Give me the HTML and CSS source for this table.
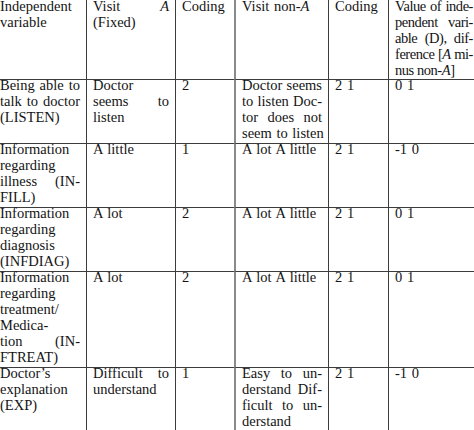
FILE: index.html
```html
<!DOCTYPE html>
<html>
<head>
<meta charset="utf-8">
<link rel="stylesheet" href="styles.css">
</head>
<body>
<table class="tbl">
  <colgroup>
    <col class="c1"><col class="c2"><col class="c3"><col class="c4"><col class="c5"><col class="c6">
  </colgroup>
  <thead>
    <tr>
      <th><div class="in"><span class="l">Independent</span><span class="l">variable</span></div></th>
      <th><div class="in"><span class="l j">Visit <i>A</i></span><span class="l">(Fixed)</span></div></th>
      <th><div class="in"><span class="l">Coding</span></div></th>
      <th class="dbl"><div class="in"><span class="l">Visit non-<i>A</i></span></div></th>
      <th><div class="in"><span class="l">Coding</span></div></th>
      <th class="last"><div class="in"><span class="l j">Value of inde-</span><span class="l j">pendent vari-</span><span class="l j">able (D), dif-</span><span class="l j">ference [<i>A</i> mi-</span><span class="l">nus non-<i>A</i>]</span></div></th>
    </tr>
  </thead>
  <tbody>
    <tr>
      <td><div class="in"><span class="l j">Being able to</span><span class="l j">talk to doctor</span><span class="l">(LISTEN)</span></div></td>
      <td><div class="in"><span class="l">Doctor</span><span class="l j">seems to</span><span class="l">listen</span></div></td>
      <td><div class="in"><span class="l">2</span></div></td>
      <td class="dbl"><div class="in"><span class="l j">Doctor seems</span><span class="l j">to listen Doc-</span><span class="l j">tor does not</span><span class="l">seem to listen</span></div></td>
      <td><div class="in"><span class="l">2 1</span></div></td>
      <td><div class="in"><span class="l">0 1</span></div></td>
    </tr>
    <tr>
      <td><div class="in"><span class="l">Information</span><span class="l">regarding</span><span class="l j">illness (IN-</span><span class="l">FILL)</span></div></td>
      <td><div class="in"><span class="l">A little</span></div></td>
      <td><div class="in"><span class="l">1</span></div></td>
      <td class="dbl"><div class="in"><span class="l">A lot A little</span></div></td>
      <td><div class="in"><span class="l">2 1</span></div></td>
      <td><div class="in"><span class="l">-1 0</span></div></td>
    </tr>
    <tr>
      <td><div class="in"><span class="l">Information</span><span class="l">regarding</span><span class="l">diagnosis</span><span class="l">(INFDIAG)</span></div></td>
      <td><div class="in"><span class="l">A lot</span></div></td>
      <td><div class="in"><span class="l">2</span></div></td>
      <td class="dbl"><div class="in"><span class="l">A lot A little</span></div></td>
      <td><div class="in"><span class="l">2 1</span></div></td>
      <td><div class="in"><span class="l">0 1</span></div></td>
    </tr>
    <tr>
      <td><div class="in"><span class="l">Information</span><span class="l">regarding</span><span class="l">treatment/</span><span class="l">Medica-</span><span class="l j">tion (IN-</span><span class="l">FTREAT)</span></div></td>
      <td><div class="in"><span class="l">A lot</span></div></td>
      <td><div class="in"><span class="l">2</span></div></td>
      <td class="dbl"><div class="in"><span class="l">A lot A little</span></div></td>
      <td><div class="in"><span class="l">2 1</span></div></td>
      <td><div class="in"><span class="l">0 1</span></div></td>
    </tr>
    <tr>
      <td><div class="in"><span class="l">Doctor’s</span><span class="l">explanation</span><span class="l">(EXP)</span></div></td>
      <td><div class="in"><span class="l j">Difficult to</span><span class="l">understand</span></div></td>
      <td><div class="in"><span class="l">1</span></div></td>
      <td class="dbl"><div class="in"><span class="l j">Easy to un-</span><span class="l j">derstand Dif-</span><span class="l j">ficult to un-</span><span class="l">derstand</span></div></td>
      <td><div class="in"><span class="l">2 1</span></div></td>
      <td><div class="in"><span class="l">-1 0</span></div></td>
    </tr>
  </tbody>
</table>
</body>
</html>
```

FILE: styles.css
```css
html, body {
  margin: 0;
  padding: 0;
  background: #ffffff;
  overflow: hidden;
}

body {
  width: 474px;
  height: 430px;
}

.tbl {
  border-collapse: separate;
  border-spacing: 0;
  table-layout: fixed;
  width: 485px;
  margin-left: -6px;
  font-family: "Liberation Serif", "Times New Roman", serif;
  font-size: 14.5px;
  color: #141414;
}

.c1 { width: 92px; }
.c2 { width: 89px; }
.c3 { width: 59px; }
.c4 { width: 94px; }
.c5 { width: 60px; }
.c6 { width: 91px; }

.tbl th,
.tbl td {
  box-sizing: border-box;
  vertical-align: top;
  text-align: left;
  font-weight: normal;
  padding: 0 6px;
  border-left: 1px solid #3c3c3c;
}

.tbl th:first-child,
.tbl td:first-child {
  border-left: none;
}

.tbl td {
  border-top: 1px solid #3c3c3c;
}

.tbl .dbl {
  border-left: 2px solid #8a8a8a;
}

.in {
  line-height: 16px;
  margin-top: -3px;
  margin-bottom: 2px;
}

.tbl th .in {
  margin-top: -2px;
  margin-bottom: 1px;
}

.l {
  display: block;
  white-space: nowrap;
  word-spacing: 1px;
}

.j {
  text-align: justify;
  text-align-last: justify;
  word-spacing: 0;
}

.last .l {
  letter-spacing: -0.45px;
  word-spacing: 0;
}

i {
  font-style: italic;
}
```
